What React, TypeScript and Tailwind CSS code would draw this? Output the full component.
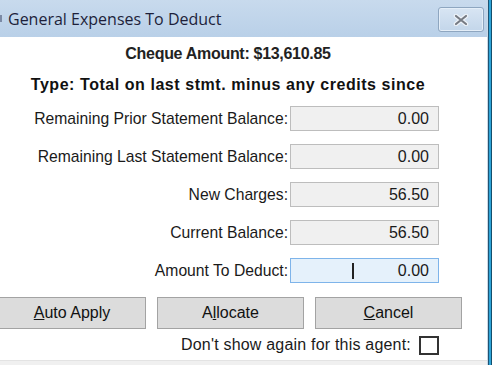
import React from "react";

const rows = [
  { label: "Remaining Prior Statement Balance:", value: "0.00" },
  { label: "Remaining Last Statement Balance:", value: "0.00" },
  { label: "New Charges:", value: "56.50" },
  { label: "Current Balance:", value: "56.50" },
];

function CloseButton() {
  return (
    <div className="mt-[7px] mr-[3px] flex h-[25px] w-[46px] items-center justify-center rounded-[3px] border border-[#8ea6c0] bg-gradient-to-b from-[#d8e5f3] to-[#c3d6ea] shadow-[inset_0_0_0_1px_#e4eef8]">
      <svg width="16" height="12" viewBox="0 0 16 12">
        <path
          d="M3 2 L13 10 M13 2 L3 10"
          stroke="#eef3f9"
          strokeWidth="4.5"
          strokeLinecap="round"
        />
        <path
          d="M3 2 L13 10 M13 2 L3 10"
          stroke="#767b84"
          strokeWidth="2.2"
          strokeLinecap="round"
        />
      </svg>
    </div>
  );
}

function Field({ value, active }: { value: string; active?: boolean }) {
  return (
    <div
      className={
        active
          ? "relative flex h-[25px] w-[149px] items-center justify-end border border-[#7eb4ea] bg-[#e5f1fb] pr-[9px]"
          : "flex h-[25px] w-[149px] items-center justify-end border border-[#bdbdbd] bg-[#f0f0f0] pr-[9px]"
      }
    >
      {active && <span className="absolute left-[61px] top-[4px] h-[16px] w-[2px] bg-[#222]" />}
      <span>{value}</span>
    </div>
  );
}

function Btn({ children, w }: { children: React.ReactNode; w: string }) {
  return (
    <button
      className={`flex h-[32px] ${w} items-center justify-center border border-[#a3a3a3] bg-[#dcdcdc] text-[16px] text-[#111]`}
    >
      {children}
    </button>
  );
}

export default function App() {
  return (
    <div
      className="flex h-[365px] w-[492px] bg-white text-[16px] text-[#1a1a1a]"
      style={{ fontFamily: '"Liberation Sans", Arial, sans-serif' }}
    >
      <div className="flex w-[487px] flex-col">
        <div className="flex h-[37px] items-start justify-between bg-gradient-to-b from-[#c8daed] to-[#b9d0e8]">
          <div className="flex h-[37px] items-center">
            <span className="h-[7px] w-[2px] bg-[#7b8aa5]" />
            <span
              className="ml-[6px] text-[16px] text-[#1d1f3a]"
              style={{ fontFamily: '"Open Sans", "Noto Sans", sans-serif' }}
            >
              General Expenses To Deduct
            </span>
          </div>
          <CloseButton />
        </div>

        <div className="flex flex-1 flex-col">
          <div className="flex h-[32px] w-[456px] items-center justify-center pt-[2px] text-[16px] font-bold tracking-[-0.3px] text-[#222]">
            Cheque Amount: $13,610.85
          </div>
          <div className="flex h-[32px] w-[456px] items-center justify-center text-[16px] font-bold tracking-[0.55px] text-[#111]">
            Type: Total on last stmt. minus any credits since
          </div>

          <div className="mt-[5px] flex w-[439px] flex-col items-end gap-[13px]">
            {rows.map((r) => (
              <div key={r.label} className="flex items-center gap-[2px]">
                <span className="text-[15.7px]">{r.label}</span>
                <Field value={r.value} />
              </div>
            ))}
            <div className="flex items-center gap-[2px]">
              <span className="text-[15.7px]">Amount To Deduct:</span>
              <Field value="0.00" active />
            </div>
          </div>

          <div className="ml-[-2px] mt-[14px] flex gap-[11px]">
            <Btn w="w-[148px]">
              <span>
                <span className="underline">A</span>uto Apply
              </span>
            </Btn>
            <Btn w="w-[147px]">
              <span>
                A<span className="underline">l</span>locate
              </span>
            </Btn>
            <Btn w="w-[147px]">
              <span>
                <span className="underline">C</span>ancel
              </span>
            </Btn>
          </div>

          <div className="mt-[4px] flex w-[439px] items-center justify-end gap-[8px]">
            <span className="tracking-[0.2px]">Don't show again for this agent:</span>
            <span className="h-[19px] w-[20px] border-2 border-[#333] bg-white" />
          </div>

          <div className="mt-auto h-[5px] border-t border-[#e3e3e3] bg-[#f0f0f0]" />
        </div>
      </div>
      <div className="flex">
        <div className="w-px bg-[#c9d8e6]" />
        <div className="w-px bg-[#1e5373]" />
        <div className="w-[2px] bg-[#2ea4d8]" />
        <div className="w-px bg-[#134f6c]" />
      </div>
    </div>
  );
}
